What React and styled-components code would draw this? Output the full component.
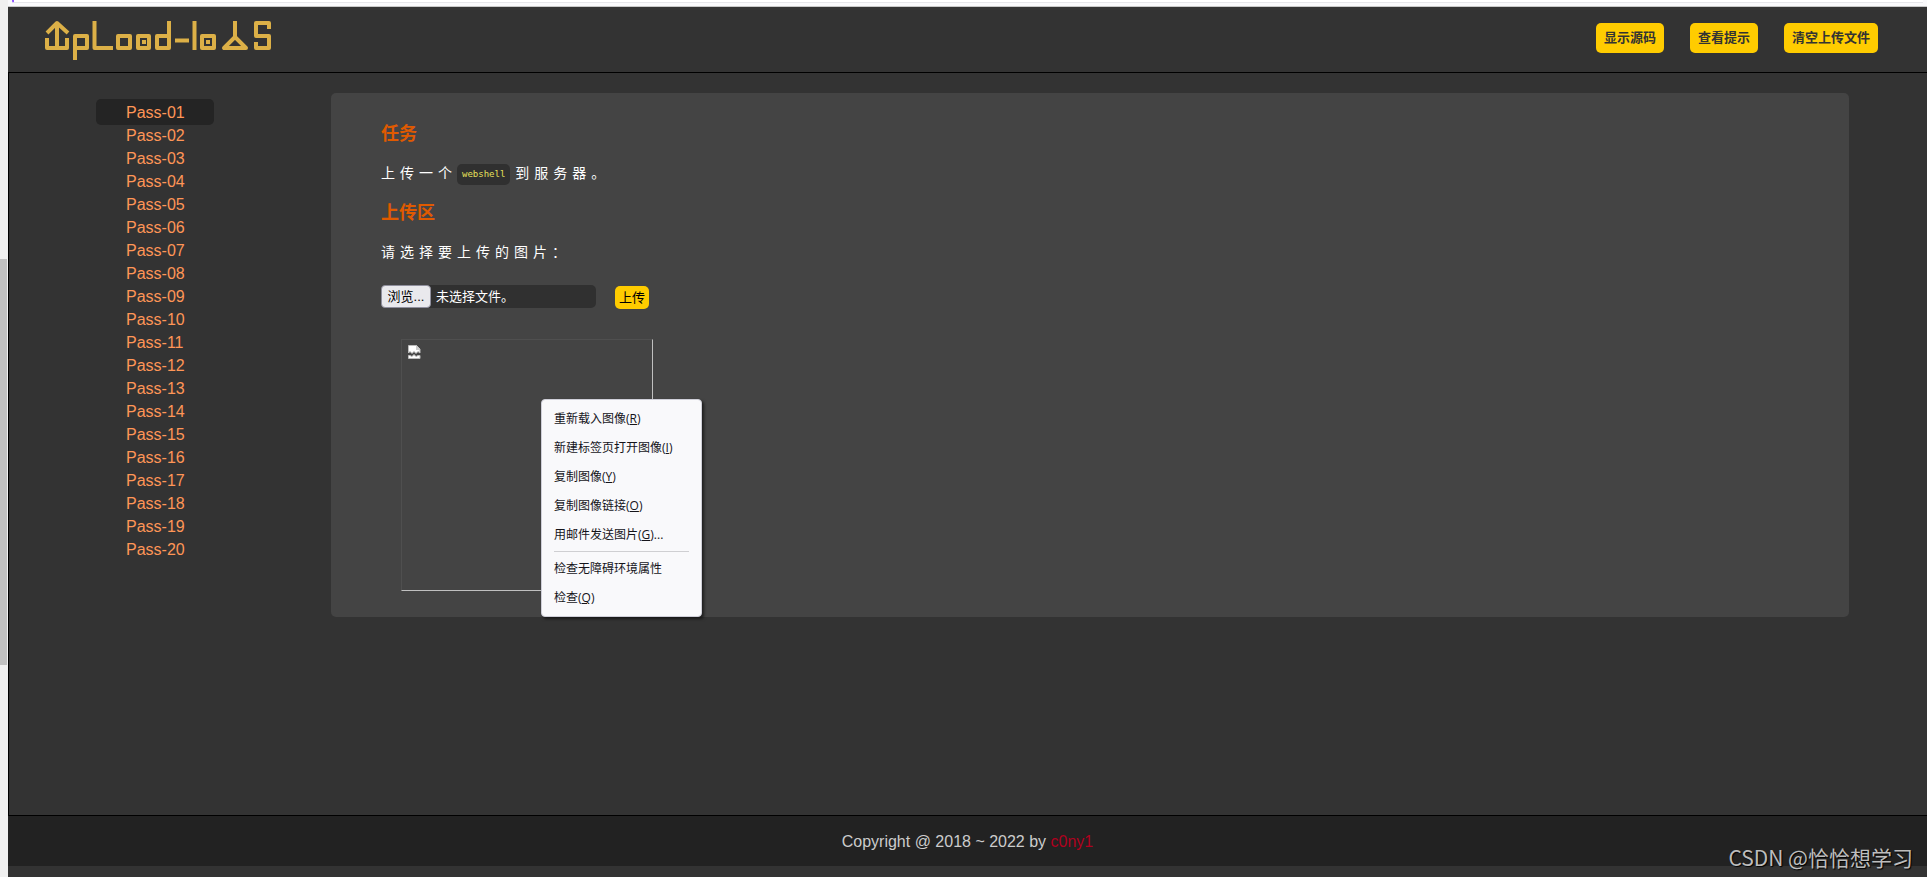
import React from "react";
import styled, { createGlobalStyle } from "styled-components";

const GlobalStyle = createGlobalStyle`
  * { box-sizing: border-box; }
  body {
    margin: 0;
    background: #333;
    font-family: "Liberation Sans", "Noto Sans CJK SC", sans-serif;
    font-size: 16px;
    color: #fff;
  }
  ul, ol { list-style: none; margin: 0; padding: 0; }
  h3, p { margin: 0; }
  a { text-decoration: none; }
  button { border: 0; cursor: pointer; font-family: inherit; }
`;

const Screen = styled.div`
  position: relative;
  display: flex;
  min-height: 100vh;
  overflow: hidden;
`;

const ScrollTrack = styled.div`
  flex: 0 0 8px;
  padding-right: 1px;
  background: #f0f0f0;
  display: grid;
  grid-template-rows: 259fr 406fr 212fr;
`;

const ScrollThumb = styled.div`
  grid-row: 2;
  background: #c1c1c1;
`;

const Window = styled.div`
  flex: 1;
  min-width: 0;
  display: flex;
  flex-direction: column;
  padding-bottom: 11px;
`;

const ToolbarEdge = styled.div`
  height: 7px;
  display: flex;
  background: #f9f9fb;
  border-bottom: 1px solid #c8c8c8;
`;

const AddressBar = styled.div`
  flex: 1;
  height: 3px;
  margin: 0 4px;
  background: #fff;
  border-bottom: 1px solid #e6e6ea;
  border-left: 2px solid #9059ff;
  border-bottom-left-radius: 2px;
`;

const Header = styled.header`
  height: 66px;
  display: flex;
  align-items: flex-start;
  justify-content: space-between;
  padding: 13px 49px 0 36px;
  border-bottom: 1px solid #000;
`;

const HeaderActions = styled.div`
  display: flex;
  gap: 26px;
  padding-top: 3px;
`;

const HeaderButton = styled.button`
  height: 30px;
  padding: 0 8px 3px;
  border-radius: 5px;
  background: #fc0;
  color: #333;
  font-size: 13px;
  font-weight: 700;
`;

const Main = styled.main`
  flex: 1;
  display: flex;
  align-items: flex-start;
  border-left: 1px solid #000;
  padding: 20px 78px 20px 0;
`;

const Sidebar = styled.nav`
  flex: 0 0 322px;
  padding: 8px 0 0 87px;
`;

const LevelItem = styled.li`
  height: 23px;
  line-height: 23px;
`;

const LevelLink = styled.a`
  padding: 5px 29px 4px 30px;
  border-radius: 5px;
  color: #ff9657;
  background: ${(p) => (p.$active ? "#242424" : "transparent")};
`;

const Panel = styled.section`
  flex: 1;
  min-width: 0;
  padding: 29px 50px 26px;
  border-radius: 5px;
  background: #444;
`;

const Steps = styled.ol`
  display: flex;
  flex-direction: column;
  gap: 16px;
`;

const Step = styled.li`
  display: flex;
  flex-direction: column;
  gap: 16px;
`;

const StepTitle = styled.h3`
  font-size: 18px;
  line-height: 24px;
  font-weight: 700;
  color: #e05a00;
`;

const StepText = styled.p`
  font-size: 14px;
  line-height: 23px;
  letter-spacing: 5px;
`;

const Code = styled.code`
  display: inline-block;
  padding: 0 5px;
  margin-right: 5px;
  border-radius: 5px;
  background: #303030;
  color: #e6e05a;
  font-family: "DejaVu Sans Mono", monospace;
  font-size: 9px;
  line-height: 21px;
  letter-spacing: 0;
  vertical-align: middle;
`;

const UploadForm = styled.form`
  display: flex;
  gap: 19px;
  margin-top: 21px;
`;

const FilePicker = styled.label`
  width: 215px;
  height: 23px;
  display: flex;
  align-items: center;
  gap: 5px;
  border-radius: 5px;
  background: #303030;
  font-size: 13px;
  line-height: 21px;
  cursor: pointer;
`;

const FileInput = styled.input`
  position: absolute;
  width: 1px;
  height: 1px;
  opacity: 0;
`;

const BrowseFace = styled.span`
  width: 50px;
  border: 1px solid #8f8f9d;
  border-radius: 4px;
  background: #e9e9ed;
  color: #000;
  text-align: center;
`;

const SubmitButton = styled.button`
  height: 23px;
  margin-top: 1px;
  padding: 0 4px 2px;
  border-radius: 5px;
  background: #fc0;
  color: #000;
  font-size: 13px;
`;

const ImageSlot = styled.div`
  position: relative;
  width: 252px;
  height: 252px;
  margin: 30px 0 0 20px;
  padding: 5px 6px;
  border: 1px solid;
  border-color: #4f4f4f #c0c0c0 #c0c0c0 #4f4f4f;
`;

const ContextMenu = styled.div`
  position: absolute;
  left: 139px;
  top: 59px;
  width: 161px;
  padding: 4px 0;
  border: 1px solid #cfcfd8;
  border-radius: 4px;
  background: #f9f9fb;
  box-shadow: 2px 2px 3px rgba(0, 0, 0, 0.55);
`;

const MenuItem = styled.button`
  display: block;
  width: 100%;
  height: 29px;
  padding: 0 12px;
  background: transparent;
  color: #15141a;
  font-family: "Open Sans", "Noto Sans CJK SC", sans-serif;
  font-size: 12px;
  line-height: 29px;
  text-align: left;
  white-space: nowrap;
`;

const MenuDivider = styled.hr`
  height: 1px;
  margin: 2px 12px;
  border: 0;
  background: #cfcfd2;
`;

const Footer = styled.footer`
  height: 51px;
  border-top: 1px solid #000;
  background: #222;
  color: #ccc;
  line-height: 51px;
  text-align: center;
`;

const AuthorLink = styled.a`
  color: #b0001e;
`;

const Watermark = styled.div`
  position: absolute;
  right: 14px;
  bottom: 6px;
  color: #bdbdbd;
  font-family: "Noto Sans CJK SC", sans-serif;
  font-size: 21px;
  line-height: 28px;
  text-shadow: 1px 1px 1px #000;
`;

function Logo() {
  return (
    <svg width="228" height="41" viewBox="44 20 228 41" role="img" aria-label="Upload-labs">
      <g fill="none" stroke="#dcb047" strokeWidth="4" strokeLinejoin="round">
        <path d="M47 38V48H67V38M57 48V23M47 33L57 23L68 33" />
        <path d="M75 60V36H87V48H75" />
        <path d="M94.500 21V48H113" />
        <path d="M118 36H130V48H118Z" />
        <path d="M138 36H149V48H138Z" />
        <path d="M169 21V48H157V36H169" />
        <path d="M175 40.500H189" />
        <path d="M194.500 21V50" />
        <path d="M202 36H214V48H202Z" />
        <path d="M235 21V37M235 37L224 48H246Z" />
        <path d="M269 29V23H256V36H269V48H256V42" />
      </g>
      <path fill="#dcb047" d="M142 40h4v4h-4zM206 40h4v4h-4z" />
    </svg>
  );
}

function BrokenImage() {
  return (
    <svg width="13" height="14" viewBox="0 0 13 14" role="img" aria-label="图像">
      <path fill="#fff" stroke="#bbb" d="M.5.500H8.500L12 4V8L10 6.500L8 8.500L6 6.500L4 8.500L2 6.500L.5 8Z" />
      <path fill="#ccc" d="M8 0V5H12V4L9 1Z" />
      <path fill="#fff" stroke="#bbb" d="M.5 13.500V10.500H2L4 11.500L6 9.500L8 11.500L10 10.500H12V13.500Z" />
    </svg>
  );
}

const levels = Array.from({ length: 20 }, (_, i) => `Pass-${String(i + 1).padStart(2, "0")}`);

const menuGroups = [
  [
    { label: "重新载入图像", accessKey: "R" },
    { label: "新建标签页打开图像", accessKey: "I" },
    { label: "复制图像", accessKey: "Y" },
    { label: "复制图像链接", accessKey: "O" },
    { label: "用邮件发送图片", accessKey: "G", more: true },
  ],
  [{ label: "检查无障碍环境属性" }, { label: "检查", accessKey: "Q" }],
];

export default function App() {
  return (
    <>
      <GlobalStyle />
      <Screen>
        <ScrollTrack aria-hidden="true">
          <ScrollThumb />
        </ScrollTrack>
        <Window>
          <ToolbarEdge>
            <AddressBar />
          </ToolbarEdge>
          <Header>
            <Logo />
            <HeaderActions>
              <HeaderButton type="button">显示源码</HeaderButton>
              <HeaderButton type="button">查看提示</HeaderButton>
              <HeaderButton type="button">清空上传文件</HeaderButton>
            </HeaderActions>
          </Header>
          <Main>
            <Sidebar>
              <ul>
                {levels.map((level, i) => (
                  <LevelItem key={level}>
                    <LevelLink href={`#${level}`} $active={i === 0}>
                      {level}
                    </LevelLink>
                  </LevelItem>
                ))}
              </ul>
            </Sidebar>
            <Panel>
              <Steps>
                <Step>
                  <StepTitle>任务</StepTitle>
                  <StepText>
                    上传一个<Code>webshell</Code>到服务器。
                  </StepText>
                </Step>
                <Step>
                  <StepTitle>上传区</StepTitle>
                  <StepText>请选择要上传的图片：</StepText>
                </Step>
              </Steps>
              <UploadForm onSubmit={(e) => e.preventDefault()}>
                <FilePicker>
                  <FileInput type="file" name="upload_file" />
                  <BrowseFace>浏览...</BrowseFace>
                  <span>未选择文件。</span>
                </FilePicker>
                <SubmitButton type="submit">上传</SubmitButton>
              </UploadForm>
              <ImageSlot>
                <BrokenImage />
                <ContextMenu role="menu">
                  {menuGroups.map((group, g) => (
                    <React.Fragment key={g}>
                      {g > 0 && <MenuDivider />}
                      {group.map((item) => (
                        <MenuItem key={item.label} type="button" role="menuitem">
                          {item.label}
                          {item.accessKey && (
                            <>
                              (<u>{item.accessKey}</u>)
                            </>
                          )}
                          {item.more && "..."}
                        </MenuItem>
                      ))}
                    </React.Fragment>
                  ))}
                </ContextMenu>
              </ImageSlot>
            </Panel>
          </Main>
          <Footer>
            Copyright @ 2018 ~ 2022 by <AuthorLink href="#author">c0ny1</AuthorLink>
          </Footer>
        </Window>
        <Watermark>CSDN @恰恰想学习</Watermark>
      </Screen>
    </>
  );
}
